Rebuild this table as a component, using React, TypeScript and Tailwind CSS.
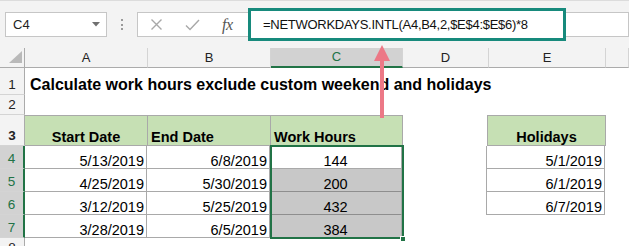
import React from "react";

const GREEN = "#217346";

function ColHead({ w, label, sel }: { w: number | null; label: string; sel?: boolean }) {
  return (
    <div
      className={`flex items-end justify-center pb-[3px] text-[13px] leading-[13px] border-r border-[#d4d4d4] ${
        sel ? "bg-[#d2d2d2] text-[#217346] border-b-2 border-b-[#217346]" : "border-b border-b-[#ababab]"
      } ${w === null ? "flex-1" : "shrink-0"}`}
      style={w === null ? undefined : { width: w }}
    >
      {label}
    </div>
  );
}

function RowHead({ n, sel }: { n: string; sel?: boolean }) {
  return (
    <div
      className={`w-[25px] shrink-0 flex items-end justify-center pb-[2px] text-[13.5px] leading-[14px] border-b border-[#d4d4d4] ${
        sel ? "bg-[#d2d2d2] text-[#217346] border-r-2 border-r-[#217346]" : "bg-[#f3f3f3] text-[#222] border-r border-r-[#ababab]"
      }`}
    >
      {n}
    </div>
  );
}

const W = [123, 123, 132, 86, 117];

export default function App() {
  const dataRows = [
    ["4", "5/13/2019", "6/8/2019", "144", "5/1/2019"],
    ["5", "4/25/2019", "5/30/2019", "200", "6/1/2019"],
    ["6", "3/12/2019", "5/25/2019", "432", "6/7/2019"],
    ["7", "3/28/2019", "6/5/2019", "384", ""],
  ];
  const tb = "border-r border-b border-[#a9a9a9]";
  return (
    <div
      className="relative w-[629px] h-[246px] overflow-hidden bg-white text-black"
      style={{ fontFamily: '"Liberation Sans", Arial, sans-serif' }}
    >
      {/* Top formula bar */}
      <div className="h-[48px] bg-[#f3f3f3] border-t border-[#dcdcdc] flex items-start pt-[11px]">
        <div className="ml-[5px] w-[102px] h-[25px] bg-white border border-[#c6c6c6] flex items-center justify-between pl-[7px] pr-[6px]">
          <span className="text-[13px] text-[#222]">C4</span>
          <svg width="8" height="5" viewBox="0 0 8 5">
            <path d="M0 0 L8 0 L4 4.5 Z" fill="#707070" />
          </svg>
        </div>
        <div className="w-[30px] h-[25px] flex flex-col items-center justify-center gap-[2.5px]">
          <div className="w-[2px] h-[2px] bg-[#9a9a9a]" />
          <div className="w-[2px] h-[2px] bg-[#9a9a9a]" />
          <div className="w-[2px] h-[2px] bg-[#9a9a9a]" />
        </div>
        <div className="flex-1 h-[25px] bg-white border border-[#c6c6c6] flex items-center">
          <div className="w-[111px] shrink-0 flex items-center h-full">
            <svg className="ml-[12px]" width="13" height="13" viewBox="0 0 13 13">
              <path d="M1.5 1.5 L11.5 11.5 M11.5 1.5 L1.5 11.5" stroke="#a8a8a8" strokeWidth="1.4" fill="none" />
            </svg>
            <svg className="ml-[22px]" width="15" height="12" viewBox="0 0 15 12">
              <path d="M1 6.5 L5 10.5 L14 1" stroke="#a8a8a8" strokeWidth="1.4" fill="none" />
            </svg>
            <span
              className="ml-[22px] text-[16px] italic text-[#555] tracking-[-0.5px]"
              style={{ fontFamily: '"Liberation Serif", "Times New Roman", serif' }}
            >
              fx
            </span>
          </div>
          <div className="w-[318px] h-[33px] -ml-px shrink-0 bg-white border-[3px] border-[#178a7c] flex items-center pl-[12px]">
            <span className="text-[13px] tracking-[-0.28px] text-[#111]">
              =NETWORKDAYS.INTL(A4,B4,2,$E$4:$E$6)*8
            </span>
          </div>
        </div>
      </div>

      {/* Column header row */}
      <div className="flex h-[20px] bg-[#f3f3f3] text-[#222]">
        <div className="w-[25px] shrink-0 border-r border-b border-[#ababab] relative">
          <svg className="absolute left-[9px] top-[3px]" width="13" height="12" viewBox="0 0 13 12">
            <path d="M13 0 L13 12 L0 12 Z" fill="#b9b9b9" />
          </svg>
        </div>
        <ColHead w={W[0]} label="A" />
        <ColHead w={W[1]} label="B" />
        <ColHead w={W[2]} label="C" sel />
        <ColHead w={W[3]} label="D" />
        <ColHead w={W[4]} label="E" />
        <ColHead w={null} label="" />
      </div>

      {/* Row 1 */}
      <div className="flex h-[27px]">
        <RowHead n="1" />
        <div className="flex-1 flex items-end pl-[5px] pb-[1px] whitespace-nowrap font-bold text-[16px] leading-[18px]">
          Calculate work hours exclude custom weekend and holidays
        </div>
      </div>

      {/* Row 2 */}
      <div className="flex h-[20px]">
        <RowHead n="2" />
        <div className="flex-1" />
      </div>

      {/* Row 3 */}
      <div className="flex h-[31px] text-[14.5px] leading-[14px] font-bold">
        <RowHead n="3" />
        <div className={`w-[123px] shrink-0 bg-[#c6e0b4] border-t ${tb} flex items-end justify-center pb-[1px]`}>
          Start Date
        </div>
        <div className={`w-[123px] shrink-0 bg-[#c6e0b4] border-t ${tb} flex items-end pl-[3px] pb-[1px]`}>
          End Date
        </div>
        <div className={`w-[132px] shrink-0 bg-[#c6e0b4] border-t ${tb} flex items-end pl-[3px] pb-[1px]`}>
          Work Hours
        </div>
        <div className="w-[85px] shrink-0 border-r border-[#a9a9a9]" />
        <div className={`w-[118px] shrink-0 bg-[#c6e0b4] border-t ${tb} flex items-end justify-center pb-[1px]`}>
          Holidays
        </div>
        <div className="flex-1" />
      </div>

      {/* Data rows */}
      {dataRows.map((r, i) => (
        <div key={r[0]} className="flex h-[23px] text-[14.5px] leading-[14px]">
          <RowHead n={r[0]} sel />
          <div className={`w-[122px] shrink-0 ${tb} flex items-end justify-end pr-[2px]`}>{r[1]}</div>
          <div className={`w-[123px] shrink-0 ${tb} flex items-end justify-end pr-[2px]`}>{r[2]}</div>
          <div
            className={`w-[132px] shrink-0 ${tb} ${i === 0 ? "bg-white" : "bg-[#c8c8c8] border-b-[#8e8e8e]"} flex items-end justify-center`}
          >
            {r[3]}
          </div>
          <div className={`w-[85px] shrink-0 ${r[4] ? "border-r border-[#a9a9a9]" : ""}`} />
          {r[4] ? (
            <div className={`w-[118px] shrink-0 ${tb} flex items-end justify-end pr-[2px]`}>{r[4]}</div>
          ) : (
            <div className="w-[118px] shrink-0" />
          )}
          <div className="flex-1" />
        </div>
      ))}

      {/* Row 8 */}
      <div className="flex h-[20px]">
        <RowHead n="8" />
        <div className="flex-1" />
      </div>

      {/* Selection outline */}
      <div className="absolute left-[270px] top-[145px] w-[134px] h-[94px] border-2 border-[#217346] pointer-events-none" />
      <div className="absolute left-[400px] top-[236px] w-[6px] h-[6px] bg-[#217346] border border-white pointer-events-none" />

      {/* Arrow */}
      <svg className="absolute left-[373px] top-[43px] pointer-events-none" width="18" height="78" viewBox="0 0 18 78">
        <path d="M9 16 L9 75" stroke="#ec7886" strokeWidth="4" fill="none" />
        <path d="M1 18 L9 2 L17 18 Z" fill="#ec7886" />
      </svg>
      <span className="hidden">{GREEN}</span>
    </div>
  );
}
